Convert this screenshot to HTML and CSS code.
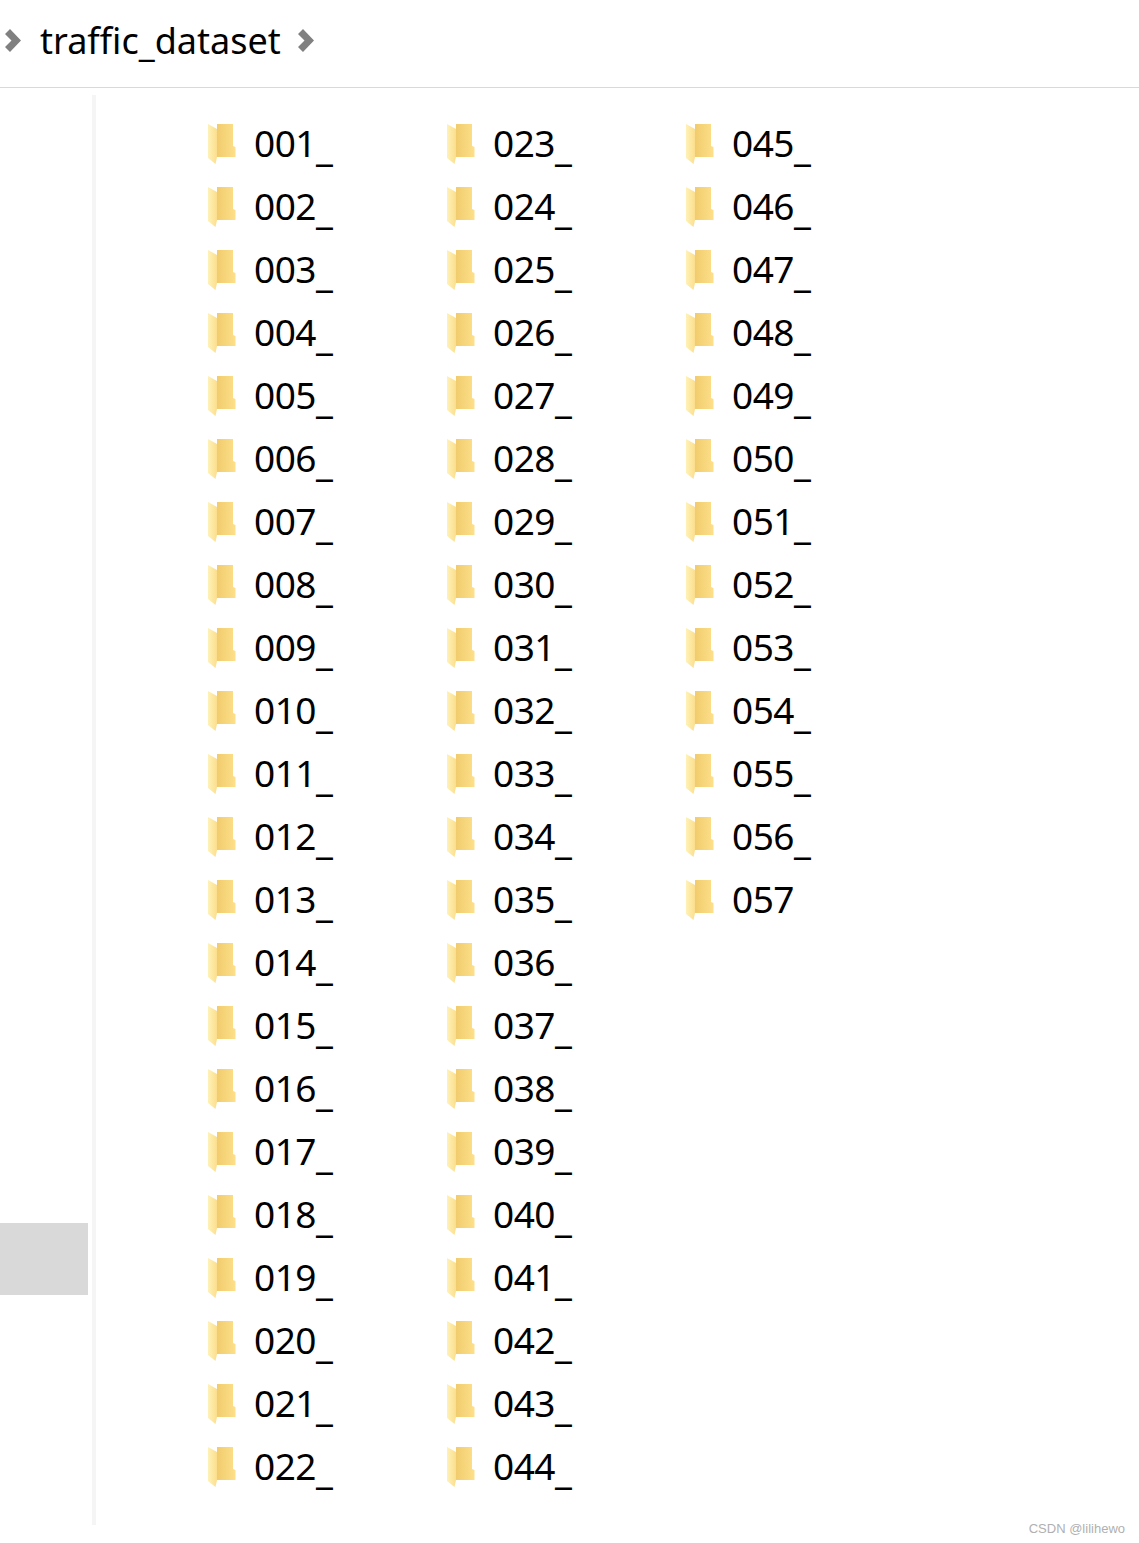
FILE: index.html
```html
<!DOCTYPE html>
<html lang="en">
<head>
    <meta charset="UTF-8">
    <title>traffic_dataset</title>
    <link rel="stylesheet" href="styles.css">
</head>
<body>
    <svg class="defs" width="0" height="0">
        <defs>
            <linearGradient id="back-fill" x1="0" y1="0" x2="1" y2="0">
                <stop offset="0.300" stop-color="#f0cb6c"/>
                <stop offset="1" stop-color="#fde08a"/>
            </linearGradient>
            <linearGradient id="flap-fill" x1="0" y1="0" x2="1" y2="0">
                <stop offset="0" stop-color="#fff2b8"/>
                <stop offset="1" stop-color="#fbde8c"/>
            </linearGradient>
            <symbol id="folder" viewBox="0 0 28 40">
                <path d="M0 0H25V22L27.500 23V33H9V0Z" fill="url(#back-fill)"/>
                <path d="M0 0L9 5V33L7.500 40L0 34Z" fill="url(#flap-fill)"/>
            </symbol>
            <symbol id="chevron" viewBox="0 0 16 23">
                <path d="M0 5L5 0L16 11.500L5 23L0 18L6.500 11.500Z" fill="#808080"/>
            </symbol>
        </defs>
    </svg>

    <div class="breadcrumb">
        <svg class="chevron"><use href="#chevron"/></svg>
        <span class="crumb">traffic<span class="crumb-sep">_</span>dataset</span>
        <svg class="chevron"><use href="#chevron"/></svg>
    </div>

    <div class="explorer">
        <div class="nav-pane">
            <div class="nav-selected"></div>
        </div>
        <div class="file-list">
            <div class="item"><svg class="folder"><use href="#folder"/></svg><span>001<span class="sep">_</span></span></div>
            <div class="item"><svg class="folder"><use href="#folder"/></svg><span>002<span class="sep">_</span></span></div>
            <div class="item"><svg class="folder"><use href="#folder"/></svg><span>003<span class="sep">_</span></span></div>
            <div class="item"><svg class="folder"><use href="#folder"/></svg><span>004<span class="sep">_</span></span></div>
            <div class="item"><svg class="folder"><use href="#folder"/></svg><span>005<span class="sep">_</span></span></div>
            <div class="item"><svg class="folder"><use href="#folder"/></svg><span>006<span class="sep">_</span></span></div>
            <div class="item"><svg class="folder"><use href="#folder"/></svg><span>007<span class="sep">_</span></span></div>
            <div class="item"><svg class="folder"><use href="#folder"/></svg><span>008<span class="sep">_</span></span></div>
            <div class="item"><svg class="folder"><use href="#folder"/></svg><span>009<span class="sep">_</span></span></div>
            <div class="item"><svg class="folder"><use href="#folder"/></svg><span>010<span class="sep">_</span></span></div>
            <div class="item"><svg class="folder"><use href="#folder"/></svg><span>011<span class="sep">_</span></span></div>
            <div class="item"><svg class="folder"><use href="#folder"/></svg><span>012<span class="sep">_</span></span></div>
            <div class="item"><svg class="folder"><use href="#folder"/></svg><span>013<span class="sep">_</span></span></div>
            <div class="item"><svg class="folder"><use href="#folder"/></svg><span>014<span class="sep">_</span></span></div>
            <div class="item"><svg class="folder"><use href="#folder"/></svg><span>015<span class="sep">_</span></span></div>
            <div class="item"><svg class="folder"><use href="#folder"/></svg><span>016<span class="sep">_</span></span></div>
            <div class="item"><svg class="folder"><use href="#folder"/></svg><span>017<span class="sep">_</span></span></div>
            <div class="item"><svg class="folder"><use href="#folder"/></svg><span>018<span class="sep">_</span></span></div>
            <div class="item"><svg class="folder"><use href="#folder"/></svg><span>019<span class="sep">_</span></span></div>
            <div class="item"><svg class="folder"><use href="#folder"/></svg><span>020<span class="sep">_</span></span></div>
            <div class="item"><svg class="folder"><use href="#folder"/></svg><span>021<span class="sep">_</span></span></div>
            <div class="item"><svg class="folder"><use href="#folder"/></svg><span>022<span class="sep">_</span></span></div>
            <div class="item"><svg class="folder"><use href="#folder"/></svg><span>023<span class="sep">_</span></span></div>
            <div class="item"><svg class="folder"><use href="#folder"/></svg><span>024<span class="sep">_</span></span></div>
            <div class="item"><svg class="folder"><use href="#folder"/></svg><span>025<span class="sep">_</span></span></div>
            <div class="item"><svg class="folder"><use href="#folder"/></svg><span>026<span class="sep">_</span></span></div>
            <div class="item"><svg class="folder"><use href="#folder"/></svg><span>027<span class="sep">_</span></span></div>
            <div class="item"><svg class="folder"><use href="#folder"/></svg><span>028<span class="sep">_</span></span></div>
            <div class="item"><svg class="folder"><use href="#folder"/></svg><span>029<span class="sep">_</span></span></div>
            <div class="item"><svg class="folder"><use href="#folder"/></svg><span>030<span class="sep">_</span></span></div>
            <div class="item"><svg class="folder"><use href="#folder"/></svg><span>031<span class="sep">_</span></span></div>
            <div class="item"><svg class="folder"><use href="#folder"/></svg><span>032<span class="sep">_</span></span></div>
            <div class="item"><svg class="folder"><use href="#folder"/></svg><span>033<span class="sep">_</span></span></div>
            <div class="item"><svg class="folder"><use href="#folder"/></svg><span>034<span class="sep">_</span></span></div>
            <div class="item"><svg class="folder"><use href="#folder"/></svg><span>035<span class="sep">_</span></span></div>
            <div class="item"><svg class="folder"><use href="#folder"/></svg><span>036<span class="sep">_</span></span></div>
            <div class="item"><svg class="folder"><use href="#folder"/></svg><span>037<span class="sep">_</span></span></div>
            <div class="item"><svg class="folder"><use href="#folder"/></svg><span>038<span class="sep">_</span></span></div>
            <div class="item"><svg class="folder"><use href="#folder"/></svg><span>039<span class="sep">_</span></span></div>
            <div class="item"><svg class="folder"><use href="#folder"/></svg><span>040<span class="sep">_</span></span></div>
            <div class="item"><svg class="folder"><use href="#folder"/></svg><span>041<span class="sep">_</span></span></div>
            <div class="item"><svg class="folder"><use href="#folder"/></svg><span>042<span class="sep">_</span></span></div>
            <div class="item"><svg class="folder"><use href="#folder"/></svg><span>043<span class="sep">_</span></span></div>
            <div class="item"><svg class="folder"><use href="#folder"/></svg><span>044<span class="sep">_</span></span></div>
            <div class="item"><svg class="folder"><use href="#folder"/></svg><span>045<span class="sep">_</span></span></div>
            <div class="item"><svg class="folder"><use href="#folder"/></svg><span>046<span class="sep">_</span></span></div>
            <div class="item"><svg class="folder"><use href="#folder"/></svg><span>047<span class="sep">_</span></span></div>
            <div class="item"><svg class="folder"><use href="#folder"/></svg><span>048<span class="sep">_</span></span></div>
            <div class="item"><svg class="folder"><use href="#folder"/></svg><span>049<span class="sep">_</span></span></div>
            <div class="item"><svg class="folder"><use href="#folder"/></svg><span>050<span class="sep">_</span></span></div>
            <div class="item"><svg class="folder"><use href="#folder"/></svg><span>051<span class="sep">_</span></span></div>
            <div class="item"><svg class="folder"><use href="#folder"/></svg><span>052<span class="sep">_</span></span></div>
            <div class="item"><svg class="folder"><use href="#folder"/></svg><span>053<span class="sep">_</span></span></div>
            <div class="item"><svg class="folder"><use href="#folder"/></svg><span>054<span class="sep">_</span></span></div>
            <div class="item"><svg class="folder"><use href="#folder"/></svg><span>055<span class="sep">_</span></span></div>
            <div class="item"><svg class="folder"><use href="#folder"/></svg><span>056<span class="sep">_</span></span></div>
            <div class="item"><svg class="folder"><use href="#folder"/></svg><span>057</span></div>
        </div>
    </div>

    <div class="watermark">CSDN @lilihewo</div>
</body>
</html>
```

FILE: styles.css
```css
/* Global Styles */
* {
    margin: 0;
    padding: 0;
    box-sizing: border-box;
}

html, body {
    height: 1543px;
    overflow: hidden;
}

body {
    font-family: "Noto Sans", sans-serif;
    background-color: #fff;
    color: #000;
    position: relative;
}

.defs {
    position: absolute;
}

/* Breadcrumb bar */
.breadcrumb {
    height: 88px;
    border-bottom: 1px solid #d9d9d9;
    display: flex;
    align-items: center;
    padding: 0 0 7px 5px;
}

.crumb {
    font-size: 36px;
    line-height: 50px;
    margin: 4px 17px 0 19px;
}

.crumb-sep {
    vertical-align: -2px;
}

.chevron {
    width: 16px;
    height: 23px;
}

/* Sits lower and a little wider than Noto's own underscore */
.sep {
    font-size: 38px;
    letter-spacing: 0;
    vertical-align: -4px;
}

/* Explorer body */
.explorer {
    display: flex;
    padding-top: 7px;
}

.nav-pane {
    width: 96px;
    height: 1430px;
    border-right: 4px solid #f5f5f5;
    padding-top: 1128px;
    flex-shrink: 0;
}

.nav-selected {
    width: 88px;
    height: 72px;
    background-color: #d9d9d9;
}

/* Folder list */
.file-list {
    display: grid;
    grid-auto-flow: column;
    grid-template-rows: repeat(22, 63px);
    grid-auto-columns: 239px;
    padding: 26px 0 0 112px;
}

.item {
    display: flex;
    align-items: flex-start;
    gap: 18px;
    font-size: 37px;
    letter-spacing: -0.5px;
    line-height: 44px;
}

.folder {
    width: 28px;
    height: 40px;
    flex-shrink: 0;
    margin-top: 3px;
}

.watermark {
    position: absolute;
    right: 14px;
    bottom: 7px;
    font-family: "Liberation Sans", sans-serif;
    font-size: 13px;
    color: #b0b0b0;
}
```
